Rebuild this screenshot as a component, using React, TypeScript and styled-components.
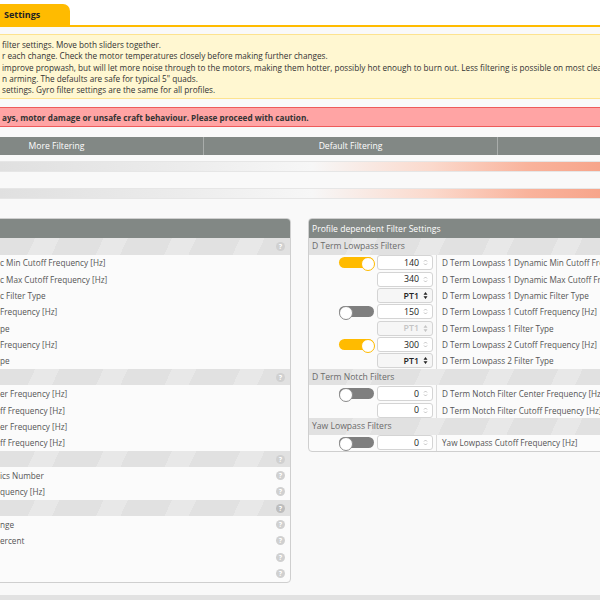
import React from "react";
import styled, { createGlobalStyle } from "styled-components";

const GlobalStyle = createGlobalStyle`
  html, body {
    margin: 0;
    padding: 0;
    background: #f9f9f9;
  }
  body {
    width: 600px;
    height: 600px;
    overflow: hidden;
    font-family: "Open Sans", "Liberation Sans", sans-serif;
    color: #333;
  }
  #root {
    width: 600px;
    height: 600px;
    overflow: hidden;
  }
  * {
    box-sizing: border-box;
  }
`;

const ROW = 16.37;

const Page = styled.div`
  display: flex;
  flex-direction: column;
  height: 600px;
  overflow: hidden;
`;

const TabBar = styled.div`
  display: flex;
  align-items: flex-end;
  height: 27px;
  background: #fff;
  border-bottom: 2px solid #ffbb00;
`;

const Tab = styled.div`
  display: flex;
  align-items: center;
  width: 70px;
  height: 21px;
  padding-left: 4px;
  background: #ffbb00;
  border-radius: 0 7px 0 0;
  font-size: 9px;
  font-weight: 700;
  color: #222;
`;

const Content = styled.div`
  display: flex;
  flex-direction: column;
  padding-top: 7px;
`;

const Note = styled.div`
  background: #fff7d1;
  border-top: 1px solid #fde38f;
  border-bottom: 1px solid #fde38f;
  padding: 4px 2px 3px;
  font-size: 8.2px;
  line-height: 11.25px;
  white-space: nowrap;
  overflow: hidden;
  color: #333;
`;

const Warning = styled.div`
  display: flex;
  align-items: center;
  height: 20px;
  margin-top: 8px;
  padding-left: 2px;
  background: #ffa4a4;
  border-top: 1px solid #ee5a5a;
  border-bottom: 1px solid #ee5a5a;
  font-size: 8.2px;
  font-weight: 700;
  color: #333;
  white-space: nowrap;
  overflow: hidden;
`;

const SliderHead = styled.div`
  display: grid;
  grid-template-columns: 294px 294px 294px;
  height: 18px;
  margin-top: 10px;
  margin-left: -90px;
  background: #828885;
`;

const SliderHeadCell = styled.div`
  display: flex;
  align-items: center;
  justify-content: center;
  color: #fff;
  font-size: 8.6px;
  border-right: 1px solid #a9adab;
`;

const Track = styled.div<{ $gap: number }>`
  height: 11px;
  margin-top: ${(p) => p.$gap}px;
  border-top: 1px solid #e6e6e6;
  border-bottom: 1px solid #e6e6e6;
  background: linear-gradient(
    to right,
    #e0e0e0 0%,
    #ececec 30%,
    #f7f7f7 52%,
    #fbd9cc 72%,
    #f9b39c 88%,
    #f7a58b 100%
  );
`;

const Panels = styled.div`
  display: flex;
  align-items: flex-start;
  gap: 17px;
  width: 620px;
  margin-top: 19px;
  margin-left: -10px;
`;

const Panel = styled.div<{ $width?: number }>`
  ${(p) => (p.$width ? `width: ${p.$width}px; flex-shrink: 0;` : "flex: 1;")}
  border: 1px solid #cfcfcf;
  border-radius: 4px;
  background: #fbfbfb;
  overflow: hidden;
`;

const PanelTitle = styled.div`
  display: flex;
  align-items: center;
  height: 19px;
  padding-left: 3px;
  background: #828885;
  color: #fff;
  font-size: 8.6px;
`;

const SubHead = styled.div<{ $indent: number }>`
  display: flex;
  align-items: center;
  justify-content: space-between;
  height: ${ROW}px;
  padding: 0 5px 0 ${(p) => p.$indent}px;
  color: #6a6a6a;
  font-size: 8.6px;
  background: repeating-linear-gradient(
    115deg,
    #e1e1e1 0px,
    #e1e1e1 40px,
    #e8e8e8 40px,
    #e8e8e8 62px
  );
`;

const Help = styled.span<{ $dark?: boolean }>`
  display: inline-flex;
  align-items: center;
  justify-content: center;
  width: 9px;
  height: 9px;
  border-radius: 50%;
  background: ${(p) => (p.$dark ? "#bdbdbd" : "#d0d0d0")};
  color: #fff;
  font-size: 7px;
  font-weight: 700;
  line-height: 1;
`;

const Row = styled.div`
  display: flex;
  align-items: center;
  justify-content: space-between;
  height: ${ROW}px;
`;

const LeftLabel = styled.span`
  padding-left: 9px;
  font-size: 8.2px;
  color: #555;
  white-space: nowrap;
`;

const HelpSlot = styled.span`
  padding-right: 5px;
  display: inline-flex;
`;

const RightRow = styled.div`
  display: flex;
  align-items: center;
  height: ${ROW}px;
`;

const Controls = styled.div`
  display: flex;
  align-items: center;
  justify-content: flex-end;
  gap: 3px;
  width: 128px;
  height: 100%;
  padding-right: 3px;
  border-right: 1px solid #dcdcdc;
  flex-shrink: 0;
`;

const RightLabel = styled.span`
  flex: 1;
  padding-left: 5px;
  font-size: 8.2px;
  color: #555;
  white-space: nowrap;
  overflow: hidden;
`;

const Switch = styled.span<{ $on: boolean }>`
  position: relative;
  width: 35px;
  height: 11px;
  border-radius: 6px;
  background: ${(p) => (p.$on ? "#ffbb00" : "#7f7f7f")};

  &::after {
    content: "";
    position: absolute;
    top: -0.5px;
    ${(p) => (p.$on ? "right: -0.5px;" : "left: -0.5px;")}
    width: 12px;
    height: 12px;
    border-radius: 50%;
    background: #fff;
    border: 1px solid ${(p) => (p.$on ? "#ffbb00" : "#8a8a8a")};
  }
`;

const Field = styled.span<{ $select?: boolean; $disabled?: boolean }>`
  display: flex;
  align-items: center;
  justify-content: flex-end;
  gap: 4px;
  width: 56px;
  height: 15px;
  padding-right: 4px;
  border: 1px solid #d4d4d4;
  border-radius: 3px;
  background: ${(p) => (p.$select ? "#f6f6f6" : "#fff")};
  font-size: 8.8px;
  font-weight: ${(p) => (p.$select ? 600 : 400)};
  color: ${(p) => (p.$disabled ? "#c4c4c4" : "#222")};
`;

const Footer = styled.div`
  margin-top: auto;
  height: 5px;
  background: #e2e2e2;
`;

const Spinner = () => (
  <svg width="5" height="9" viewBox="0 0 5 9">
    <path d="M1 3.5 L2.5 2 L4 3.5 M1 5.5 L2.5 7 L4 5.5" fill="none" stroke="#b0b0b0" strokeWidth="0.8" />
  </svg>
);

const SelectArrows = ({ disabled }: { disabled?: boolean }) => (
  <svg width="5" height="9" viewBox="0 0 5 9">
    <path d="M2.5 1 L4.5 3.8 H0.5 Z M2.5 8 L4.5 5.2 H0.5 Z" fill={disabled ? "#c4c4c4" : "#222"} />
  </svg>
);

const noteLines = [
  "filter settings. Move both sliders together.",
  "r each change. Check the motor temperatures closely before making further changes.",
  " improve propwash, but will let more noise through to the motors, making them hotter, possibly hot enough to burn out. Less filtering is possible on most clean builds.",
  "n arming. The defaults are safe for typical 5\" quads.",
  "settings. Gyro filter settings are the same for all profiles.",
];

type LeftSection = { rows: string[]; rowHelp: boolean; dark?: boolean };

const leftSections: LeftSection[] = [
  {
    rowHelp: false,
    rows: [
      "c Min Cutoff Frequency [Hz]",
      "c Max Cutoff Frequency [Hz]",
      "c Filter Type",
      "Frequency [Hz]",
      "pe",
      "Frequency [Hz]",
      "pe",
    ],
  },
  {
    rowHelp: false,
    rows: ["er Frequency [Hz]", "ff Frequency [Hz]", "er Frequency [Hz]", "ff Frequency [Hz]"],
  },
  { rowHelp: true, rows: ["ics Number", "quency [Hz]"] },
  { rowHelp: true, dark: true, rows: ["nge", "ercent", "", ""] },
];

type Ctrl = {
  toggle?: boolean;
  value: string;
  select?: boolean;
  disabled?: boolean;
  label: string;
};

const rightSections: { title: string; rows: Ctrl[] }[] = [
  {
    title: "D Term Lowpass Filters",
    rows: [
      { toggle: true, value: "140", label: "D Term Lowpass 1 Dynamic Min Cutoff Frequency [Hz]" },
      { value: "340", label: "D Term Lowpass 1 Dynamic Max Cutoff Frequency [Hz]" },
      { value: "PT1", select: true, label: "D Term Lowpass 1 Dynamic Filter Type" },
      { toggle: false, value: "150", label: "D Term Lowpass 1 Cutoff Frequency [Hz]" },
      { value: "PT1", select: true, disabled: true, label: "D Term Lowpass 1 Filter Type" },
      { toggle: true, value: "300", label: "D Term Lowpass 2 Cutoff Frequency [Hz]" },
      { value: "PT1", select: true, label: "D Term Lowpass 2 Filter Type" },
    ],
  },
  {
    title: "D Term Notch Filters",
    rows: [
      { toggle: false, value: "0", label: "D Term Notch Filter Center Frequency [Hz]" },
      { value: "0", label: "D Term Notch Filter Cutoff Frequency [Hz]" },
    ],
  },
  {
    title: "Yaw Lowpass Filters",
    rows: [{ toggle: false, value: "0", label: "Yaw Lowpass Cutoff Frequency [Hz]" }],
  },
];

export default function App() {
  return (
    <Page>
      <GlobalStyle />
      <TabBar>
        <Tab>Settings</Tab>
      </TabBar>
      <Content>
        <Note>
          {noteLines.map((l, i) => (
            <div key={i}>{l}</div>
          ))}
        </Note>
        <Warning>ays, motor damage or unsafe craft behaviour. Please proceed with caution.</Warning>
        <SliderHead>
          <SliderHeadCell>More Filtering</SliderHeadCell>
          <SliderHeadCell>Default Filtering</SliderHeadCell>
          <SliderHeadCell />
        </SliderHead>
        <Track $gap={6} />
        <Track $gap={16} />
        <Panels>
          <Panel $width={301}>
            <PanelTitle />
            {leftSections.map((s, i) => (
              <div key={i}>
                <SubHead $indent={9}>
                  <span />
                  <Help $dark={s.dark}>?</Help>
                </SubHead>
                {s.rows.map((r, j) => (
                  <Row key={j}>
                    <LeftLabel>{r}</LeftLabel>
                    {s.rowHelp && (
                      <HelpSlot>
                        <Help>?</Help>
                      </HelpSlot>
                    )}
                  </Row>
                ))}
              </div>
            ))}
          </Panel>
          <Panel>
            <PanelTitle>Profile dependent Filter Settings</PanelTitle>
            {rightSections.map((s) => (
              <div key={s.title}>
                <SubHead $indent={3}>{s.title}</SubHead>
                {s.rows.map((r) => (
                  <RightRow key={r.label}>
                    <Controls>
                      {r.toggle !== undefined && <Switch $on={r.toggle} />}
                      <Field $select={r.select} $disabled={r.disabled}>
                        {r.value}
                        {r.select ? <SelectArrows disabled={r.disabled} /> : <Spinner />}
                      </Field>
                    </Controls>
                    <RightLabel>{r.label}</RightLabel>
                  </RightRow>
                ))}
              </div>
            ))}
          </Panel>
        </Panels>
      </Content>
      <Footer />
    </Page>
  );
}
